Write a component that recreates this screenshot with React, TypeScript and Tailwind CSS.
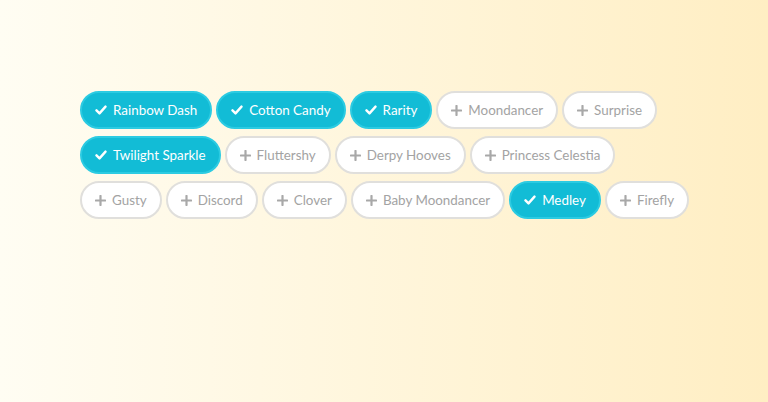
import { useState } from "react";

const ROWS = [
  [
    { name: "Rainbow Dash", on: true },
    { name: "Cotton Candy", on: true },
    { name: "Rarity", on: true },
    { name: "Moondancer", on: false },
    { name: "Surprise", on: false },
  ],
  [
    { name: "Twilight Sparkle", on: true },
    { name: "Fluttershy", on: false },
    { name: "Derpy Hooves", on: false },
    { name: "Princess Celestia", on: false },
  ],
  [
    { name: "Gusty", on: false },
    { name: "Discord", on: false },
    { name: "Clover", on: false },
    { name: "Baby Moondancer", on: false },
    { name: "Medley", on: true },
    { name: "Firefly", on: false },
  ],
];

function CheckIcon() {
  return (
    <svg width="12" height="12" viewBox="0 0 16 16" fill="none" className="shrink-0">
      <path d="M2 8.5l4 4L14 3.5" stroke="currentColor" strokeWidth="3.2" strokeLinecap="round" strokeLinejoin="round" />
    </svg>
  );
}

function PlusIcon() {
  return (
    <svg width="11" height="11" viewBox="0 0 12 12" fill="none" className="shrink-0">
      <path d="M6 1v10M1 6h10" stroke="currentColor" strokeWidth="2.4" strokeLinecap="round" />
    </svg>
  );
}

export default function App() {
  const [selected, setSelected] = useState<Record<string, boolean>>(() =>
    Object.fromEntries(ROWS.flat().map((p) => [p.name, p.on])),
  );

  function toggle(name: string) {
    setSelected((s) => ({ ...s, [name]: !s[name] }));
  }

  return (
    <div className="min-h-[402px] w-full bg-gradient-to-r from-[#fffdf3] to-[#ffeec3] px-[80px] pt-[91px] font-['Lato',sans-serif]">
      <div className="flex flex-col gap-[7px]">
        {ROWS.map((row, r) => (
          <div key={r} className="flex gap-[4px]">
            {row.map((p) =>
              selected[p.name] ? (
                <button
                  key={p.name}
                  type="button"
                  onClick={() => toggle(p.name)}
                  className="flex h-[38px] shrink-0 items-center gap-[6px] whitespace-nowrap rounded-full border-2 border-[#2ccbe2] bg-[#12bcd6] px-[13px] text-[13.4px] text-white"
                >
                  <CheckIcon />
                  {p.name}
                </button>
              ) : (
                <button
                  key={p.name}
                  type="button"
                  onClick={() => toggle(p.name)}
                  className="flex h-[38px] shrink-0 items-center gap-[6px] whitespace-nowrap rounded-full border-2 border-[#e0dfdc] bg-white px-[13px] text-[13.4px] text-[#a3a3a3]"
                >
                  <span className="text-[#a8a8a8]">
                    <PlusIcon />
                  </span>
                  {p.name}
                </button>
              ),
            )}
          </div>
        ))}
      </div>
    </div>
  );
}
